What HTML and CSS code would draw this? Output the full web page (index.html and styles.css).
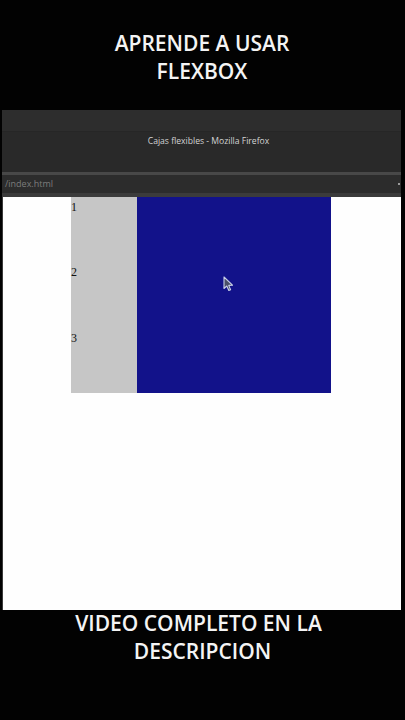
FILE: index.html
```html
<!DOCTYPE html>
<html lang="es">
<head>
<meta charset="utf-8">
<title>Aprende a usar Flexbox</title>
<link rel="stylesheet" href="styles.css">
</head>
<body>
<div class="page">
  <header class="caption caption-top">
    <div>APRENDE A USAR</div>
    <div>FLEXBOX</div>
  </header>
  <section class="window">
    <div class="titlebar">
      <div class="titlebar-top"></div>
      <div class="titlebar-main">Cajas flexibles - Mozilla Firefox</div>
    </div>
    <div class="sep sep-light"></div>
    <div class="urlbar">
      <span class="url">/index.html</span>
      <span class="url-dot"></span>
    </div>
    <div class="sep sep-dark"></div>
    <div class="content">
      <div class="flex-demo">
        <div class="side">
          <div class="item">1</div>
          <div class="item">2</div>
          <div class="item">3</div>
        </div>
        <div class="main-box">
          <svg class="cursor" width="12" height="16" viewBox="0 0 12 16">
            <path d="M1 1 L1 12.5 L3.8 10 L5.8 14.5 L7.6 13.7 L5.7 9.4 L9.5 9.2 Z" fill="#4a5068" stroke="#c9d0e8" stroke-width="1.1" stroke-linejoin="round"/>
          </svg>
        </div>
      </div>
    </div>
  </section>
  <footer class="caption caption-bottom">
    <div class="shift-left">VIDEO COMPLETO EN LA</div>
    <div>DESCRIPCION</div>
  </footer>
</div>
</body>
</html>
```
FILE: styles.css
```css
html, body {
  margin: 0;
  padding: 0;
  background: #000;
}
.page {
  width: 405px;
  height: 720px;
  display: flex;
  flex-direction: column;
  background: #020202;
  overflow: hidden;
}
.caption {
  color: #f4f4f4;
  font-family: "Open Sans", "Liberation Sans", sans-serif;
  font-weight: 600;
  font-size: 21px;
  line-height: 28px;
  text-align: center;
}
.caption-top {
  height: 110px;
  box-sizing: border-box;
  padding-top: 29px;
  padding-right: 1px;
}
.caption-bottom {
  padding-top: 0;
  margin-top: -1px;
}
.shift-left {
  padding-right: 8px;
}
.window {
  margin-left: 2px;
  width: 399px;
  height: 500px;
  display: flex;
  flex-direction: column;
  background: #2a2a2a;
}
.titlebar {
  height: 62px;
  display: flex;
  flex-direction: column;
}
.titlebar-top {
  height: 21px;
  background: #2d2d2d;
  border-bottom: 1px solid #262626;
}
.titlebar-main {
  flex: 1;
  background: #292929;
  color: #d4d4d4;
  font-family: "Open Sans", "DejaVu Sans", sans-serif;
  font-size: 8.6px;
  line-height: 10px;
  text-align: center;
  padding-top: 4px;
  padding-left: 14px;
}
.sep-light {
  height: 3px;
  background: #484848;
}
.urlbar {
  height: 18px;
  background: #2c2c2c;
  display: flex;
  align-items: center;
  justify-content: space-between;
  padding: 0 1px 0 3px;
}
.url {
  color: #7c7c7c;
  font-family: "Open Sans", "DejaVu Sans", sans-serif;
  font-size: 9px;
  line-height: 10px;
}
.url-dot {
  width: 2px;
  height: 2px;
  background: #9a9a9a;
}
.sep-dark {
  height: 4px;
  background: #3b3b3b;
}
.content {
  flex: 1;
  background: #fefefe;
  border-left: 1px solid #3a3a3a;
  padding-left: 68px;
}
.flex-demo {
  display: flex;
  height: 196px;
}
.side {
  width: 66px;
  background: #c6c6c6;
  display: flex;
  flex-direction: column;
}
.item {
  flex: 1;
  font-family: "Liberation Serif", "Times New Roman", serif;
  font-size: 12px;
  line-height: 18px;
  padding-top: 1px;
  color: #111;
}
.main-box {
  width: 194px;
  background: #12128a;
  position: relative;
}
.cursor {
  position: absolute;
  left: 86px;
  top: 79px;
}
```
